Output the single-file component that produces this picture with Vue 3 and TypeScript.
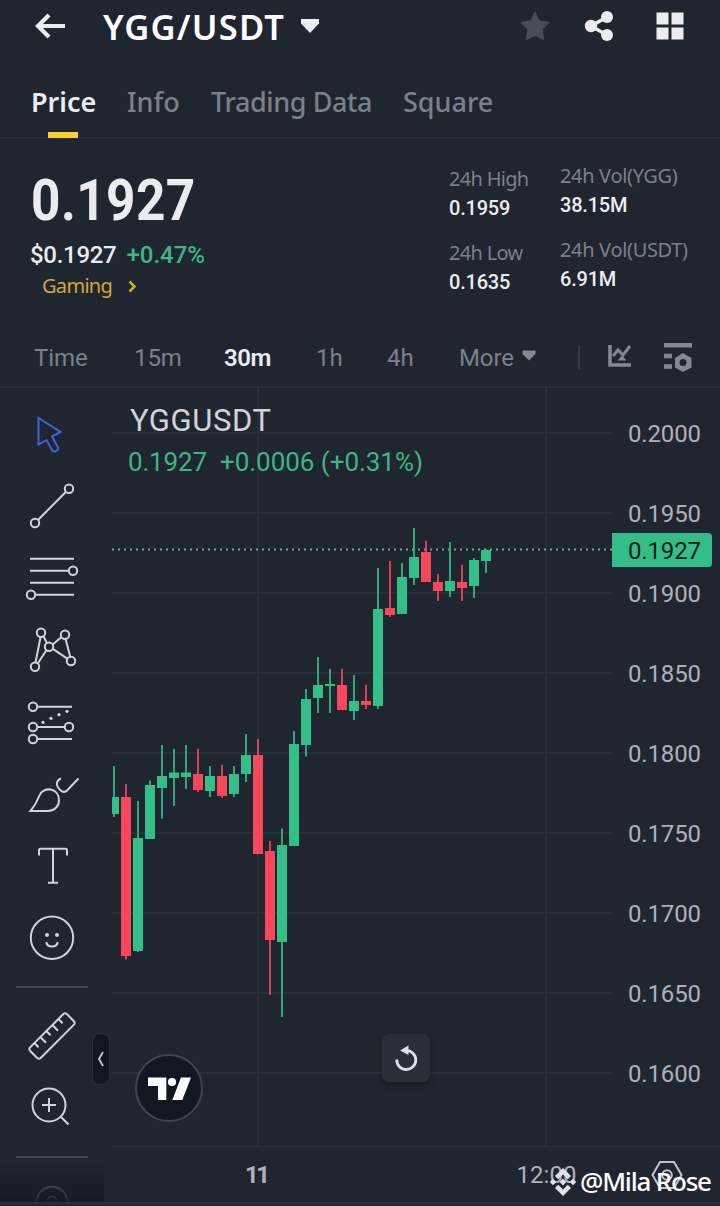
<script setup lang="ts">
type Candle = [low: number, high: number, top: number, bottom: number, up: 0 | 1]

const candles: Candle[] = [
  [766, 817, 797, 814, 1], [784, 959.5, 797, 956, 0], [801, 952, 838, 951, 1], [780.5, 839, 785, 839, 1],
  [745, 818.5, 776, 788, 1], [749, 806, 772.5, 778, 1], [745, 789, 772.5, 777, 1], [749, 792, 774, 790, 0],
  [766, 797, 776, 791, 1], [765, 798, 776, 796, 0], [766, 797, 774, 794, 1], [734, 782, 755, 774, 1],
  [739, 854, 755, 854, 0], [841, 995, 851, 940, 0], [828.5, 1017, 845, 942, 1], [731, 846, 744, 846, 1],
  [689, 756.5, 699, 745, 1], [657, 713, 685, 698, 1], [669, 713, 684, 686, 1], [669, 710, 685, 710, 0],
  [675, 720, 701, 711, 1], [685, 709, 701, 705, 0], [568, 709, 609, 706, 1], [561, 617, 608, 615, 0],
  [563, 614, 577, 614, 1], [528, 585, 557, 578, 1], [541, 582, 552, 582, 0], [574, 601, 582, 591, 0],
  [542, 597, 581, 591, 1], [565, 601, 582, 588, 0], [558, 598, 560, 586, 1], [549, 573, 550, 561, 1],
]
const prices = ['0.2000', '0.1950', '0.1900', '0.1850', '0.1800', '0.1750', '0.1700', '0.1650', '0.1600']
const tabs = ['Price', 'Info', 'Trading Data', 'Square']
const frames = ['Time', '15m', '30m', '1h', '4h']
const stats = [
  [['24h High', '0.1959'], ['24h Low', '0.1635']],
  [['24h Vol(YGG)', '38.15M'], ['24h Vol(USDT)', '6.91M']],
]
</script>

<template>
  <main class="app">
    <header class="topbar">
      <svg class="back" width="32" height="28" viewBox="0 0 32 28"><path d="M31 14H4M15 3L4 14l11 11" fill="none" stroke="#eaecef" stroke-width="4.2" /></svg>
      <h1>YGG/USDT</h1>
      <svg class="caret" width="20" height="16" viewBox="0 0 20 16"><path d="M1 1h18v4.500L10 15 1 5.500z" fill="#eaecef" /></svg>
      <svg class="star" width="32" height="32" viewBox="0 0 32 32"><path d="M16 2l4.300 8.800 9.700 1.600-6.800 7.100 1.600 10.300L16 25.200l-8.800 4.600 1.600-10.300L2 12.400l9.700-1.600z" fill="#474d57" stroke="#474d57" stroke-linejoin="round" /></svg>
      <svg class="share" width="32" height="32" viewBox="0 0 32 32"><g fill="#eaecef"><circle cx="8" cy="16" r="6.200" /><circle cx="24" cy="7" r="6" /><circle cx="24" cy="25" r="6" /></g><path d="M24 7L8 16l16 9" stroke="#eaecef" stroke-width="3.600" fill="none" /></svg>
      <svg class="apps" width="28" height="28" viewBox="0 0 28 28"><path d="M.5.5h12v12H.5zM15.500.5h12v12h-12zM.5 15.500h12v12H.5zM15.500 15.500h12v12h-12z" fill="#eaecef" /></svg>
    </header>

    <nav class="tabs">
      <span v-for="(t, i) in tabs" :key="t" :class="['tab', 't' + i, { active: i === 0 }]">{{ t }}</span>
    </nav>

    <section class="summary">
      <div class="quote">
        <div class="price">0.1927</div>
        <div class="fiat"><span>$0.1927</span><span class="gain">+0.47%</span></div>
        <div class="tag">Gaming <svg width="9" height="13" viewBox="0 0 9 13"><path d="M1.500 1.500l5 5-5 5" fill="none" stroke="#d0a92f" stroke-width="2.500" /></svg></div>
      </div>
      <dl v-for="(col, i) in stats" :key="i" :class="['stats', 's' + i]">
        <template v-for="s in col" :key="s[0]">
          <dt>{{ s[0] }}</dt>
          <dd>{{ s[1] }}</dd>
        </template>
      </dl>
    </section>

    <div class="frames">
      <span v-for="f in frames" :key="f" :class="{ on: f === '30m' }">{{ f }}</span>
      <span class="more">More <svg width="14" height="11" viewBox="0 0 14 11"><path d="M.5.5h13V4L7 10.500.5 4z" fill="#848893" /></svg></span>
      <i class="divider"></i>
      <svg class="indicator" width="24" height="24" viewBox="0 0 24 24"><path d="M2 1v20h21" fill="none" stroke="#848893" stroke-width="3.600" /><path d="M5 12l5-6 5 5 7-9" fill="none" stroke="#848893" stroke-width="3" /><path d="M9.500 16.500l4.500-5 4.500 5z" fill="#848893" /></svg>
      <svg class="settings" width="30" height="30" viewBox="0 0 30 30"><path d="M1 3.300h28M1 14h8M1 24.500h8" stroke="#848893" stroke-width="4.600" /><path d="M20 11l8.500 5v9.500L20 30l-8-4.500V16z" fill="#848893" /><circle cx="20" cy="20.500" r="3.500" fill="#1f262f" /></svg>
    </div>

    <div class="workspace">
      <aside class="tools">
        <svg class="tool" viewBox="0 0 104 72"><path class="cursor" d="M38.500 20v26.500l8-4.500 5.500 10c1.500 3 7 .5 6-2.500L52 38.500l8.500-4.500z" /></svg>
        <svg class="tool" viewBox="0 0 104 72"><circle cx="69" cy="18.700" r="4.200" /><circle cx="35" cy="53" r="4.200" /><path d="M38 50l28-28.300" /></svg>
        <svg class="tool" viewBox="0 0 104 72"><path d="M30 16.700h44M30 28.700h38.800M30 40.700h44M35.200 52.700H74" /><circle cx="73" cy="28.700" r="4.200" /><circle cx="31" cy="52.700" r="4.200" /></svg>
        <svg class="tool" viewBox="0 0 104 72"><path d="M40.600 23L35.500 48.500M43.500 22.200l3.300 6.700M52.600 30.500l9-7.500M65.600 25l4.600 18M52.800 34.800l14.500 9.800M46.500 36l-8.700 13.500" /><circle cx="41" cy="18.700" r="4.200" /><circle cx="65" cy="20.700" r="4.200" /><circle cx="49" cy="32.700" r="4.200" /><circle cx="71" cy="47" r="4.200" /><circle cx="35" cy="52.700" r="4.200" /></svg>
        <svg class="tool" viewBox="0 0 104 72"><path d="M37.200 20.700H72M37.200 41h27.600M37.200 53H72" /><circle cx="33" cy="20.700" r="4.200" /><circle cx="33" cy="41" r="4.200" /><circle cx="69" cy="41" r="4.200" /><circle cx="33" cy="53" r="4.200" /><g class="solid"><circle cx="43" cy="36.300" r="1.600" /><circle cx="51" cy="32.300" r="1.600" /><circle cx="59" cy="28.700" r="1.600" /><circle cx="67" cy="25.300" r="1.600" /></g></svg>
        <svg class="tool" viewBox="0 0 104 72"><path d="M30.500 53c5-6 7-10.500 9-15.500 4-9.500 19.500-8 19.500 5 0 6-5 10.500-11 10.500z" /><path d="M61 20.500c-4 1.500-5 5-3.500 8 2 3.500 6 7.500 9.500 4L78.500 20.500" /></svg>
        <svg class="tool" viewBox="0 0 104 72"><path d="M39 25.500v-5.300q0-1.500 1.500-1.500h25q1.500 0 1.500 1.500v5.300M53 18.700v34M48 52.700h10" /></svg>
        <svg class="tool" viewBox="0 0 104 72"><circle cx="52" cy="35.700" r="21.200" /><path d="M46.200 40c1 6 10.600 6 11.600 0" /><g class="solid"><circle cx="47" cy="33" r="2" /><circle cx="57" cy="33" r="2" /></g></svg>
        <hr />
        <svg class="tool" viewBox="0 0 104 72"><g transform="translate(52 36) rotate(-45)"><rect x="-26" y="-7.500" width="52" height="15" rx="2.800" /><path d="M-17.500-7.500v6M-9-7.500v8M-.5-7.500v6M8-7.500v8M16.500-7.500v6" /></g></svg>
        <svg class="tool" viewBox="0 0 104 72"><circle cx="49" cy="33" r="16.500" /><path d="M42 33h14M49 26v14M61 45l7.500 7.500" /></svg>
        <hr />
        <svg class="tool dim" viewBox="0 0 104 31"><circle cx="52" cy="32" r="15.200" /><circle cx="52" cy="31" r="4.500" /></svg>
        <div class="fade"></div>
        <div class="collapse"><svg width="8" height="16" viewBox="0 0 8 16"><path d="M6 1L2 8l4 7" fill="none" stroke="#c6c8cf" stroke-width="1.800" /></svg></div>
      </aside>

      <svg class="chart" viewBox="104 388 616 814" width="616" height="814">
        <g stroke="#2a303a" stroke-width="2">
          <line v-for="(p, i) in prices" :key="p" x1="112" x2="612" :y1="433 + i * 80" :y2="433 + i * 80" />
          <path d="M258 388v758M546 388v758M112 1146.500h608" />
        </g>
        <path d="M112 549.500h500" stroke="#67aa96" stroke-width="2" stroke-dasharray="2 4" />
        <g v-for="(c, i) in candles" :key="i" :fill="c[4] ? '#33bd87' : '#f6475d'">
          <rect :x="113 + i * 12" :y="c[0]" width="2" :height="c[1] - c[0]" fill-opacity=".85" />
          <rect :x="i ? 109 + i * 12 : 112" :y="c[2]" :width="i ? 10 : 7" :height="c[3] - c[2]" />
        </g>
        <g class="axis">
          <text v-for="(p, i) in prices" :key="p" x="628" :y="442 + i * 80" textLength="73">{{ p }}</text>
          <text x="245" y="1183" font-weight="700" textLength="25">11</text>
          <text x="516.500" y="1183" textLength="60">12:00</text>
        </g>
        <path d="M612 533h96q4 0 4 4v26q0 4-4 4h-96z" fill="#33bd87" />
        <text x="628" y="559" class="last" textLength="73">0.1927</text>
        <text x="130" y="431" class="symbol" textLength="141">YGGUSDT</text>
        <text x="128" y="471" class="change" textLength="79">0.1927</text>
        <text x="220" y="471" class="change" textLength="203">+0.0006 (+0.31%)</text>

        <circle cx="169" cy="1088" r="33" fill="#131722" stroke="#41454f" stroke-width="2" />
        <g fill="#fff">
          <path d="M148 1077.500h18.300v22.500H158v-14h-10zM181 1077.500h10l-8.700 22.500h-10z" /><circle cx="172" cy="1082" r="4.100" />
        </g>
        <g class="reset"><rect x="382" y="1034" width="48" height="48" rx="7" fill="#2a2e39" /><path d="M396.800 1059.500a9.500 9.500 0 1 0 9.200-9" fill="none" stroke="#dde0e8" stroke-width="2.800" /><path d="M408.500 1045.500v9.500l-8.500-4.500z" fill="#dde0e8" /></g>

        <g fill="none" stroke="#c0c3ca" stroke-width="2"><path d="M660 1162h14l7.500 13-7.500 13h-14l-7.500-13z" /><circle cx="667" cy="1175" r="4.800" /></g>
        <g class="watermark" fill="#dfe2e8">
          <path d="M563 1168l8 8-3.200 3.200-4.800-4.800-4.800 4.800-3.200-3.200zM563 1196l8-8-3.200-3.200-4.800 4.800-4.800-4.800-3.200 3.200zM563 1178.600l3.400 3.400-3.400 3.400-3.400-3.400zM553 1178.800l3.200 3.200-3.200 3.200-3.200-3.200zM573 1178.800l3.200 3.200-3.200 3.200-3.200-3.200z" />
          <text x="580" y="1191" textLength="132">@Mila Rose</text>
        </g>
      </svg>
    </div>
  </main>
</template>

<style>
body { margin: 0; background: #1f262f; }
</style>

<style scoped>
.app { width: 720px; height: 1206px; overflow: hidden; background: #1f262f; color: #eaecef; font-family: "Noto Sans", sans-serif; box-sizing: border-box; }
.topbar { display: flex; align-items: center; height: 54px; padding: 0 36px 0 34px; }
.back { margin-top: -2px; }
h1 { margin: 0 0 0 37px; width: 197px; font-size: 34.5px; line-height: 54px; font-weight: 600; letter-spacing: 1.2px; color: #fff; white-space: nowrap; }
.caret { margin-top: -3px; }
.star { margin-left: 199px; margin-top: -2px; }
.share { margin-left: 32px; margin-top: -2px; }
.apps { margin-left: auto; margin-top: -3px; }
.tabs { display: grid; grid-template-columns: 96px 84px 192px 1fr; height: 85px; box-sizing: border-box; padding-left: 31px; border-bottom: 2px solid #2a303a; font-size: 27px; line-height: 96px; font-weight: 500; color: #7b808b; white-space: nowrap; }
.tab.t2 { letter-spacing: -0.4px; }
.tab.active { color: #eaecef; position: relative; font-weight: 600; }
.tab.active::after { content: ""; position: absolute; left: 17px; top: 78px; width: 30px; height: 6px; background: #f8d033; }
.summary { display: grid; grid-template-columns: 418px 111px 1fr; padding-left: 31px; height: 189px; }
.quote { padding-top: 32px; }
.price { font: 700 57px/60px Roboto, sans-serif; letter-spacing: 0.5px; transform: scaleX(0.9); transform-origin: 0 0; }
.fiat { display: flex; gap: 10px; margin: 8px 0 0 -1px; font: 500 24px/32px Roboto, sans-serif; }
.fiat span:first-child { letter-spacing: -0.3px; }
.gain { color: #3eb584; }
.tag { margin: 0 0 0 11px; font-size: 20px; line-height: 29px; letter-spacing: -0.7px; color: #d0a92f; }
.tag svg { margin-left: 11px; }
.stats { margin: 26px 0 0; font-size: 20px; line-height: 28px; white-space: nowrap; }
.stats.s1 { margin-top: 23px; }
dt { color: #7b808b; letter-spacing: -0.7px; }
.s1 dt { letter-spacing: -0.33px; }
dd { margin: 0 0 15px; font: 500 20px/31px Roboto, sans-serif; letter-spacing: -0.2px; }
.frames { display: grid; grid-template-columns: 100px 90px 92px 71px 72px 119px 30px 56px 30px; align-items: center; box-sizing: border-box; height: 60px; padding-left: 34px; border-bottom: 2px solid #2a303a; font: 400 24px/56px Roboto, sans-serif; color: #7b808b; }
.frames span { padding-top: 1px; letter-spacing: -0.1px; }
.frames .on { color: #eaecef; font-weight: 600; letter-spacing: -0.4px; }
.more svg { margin: 0 0 5px 2px; }
.divider { width: 2px; height: 24px; background: #343a45; }
.indicator { margin-top: -2px; }
.settings { margin: -1px 0 0 -1px; }
.workspace { display: flex; height: 814px; border-bottom: 2px solid #2a303a; }
.tools { position: relative; display: flex; flex-direction: column; width: 104px; height: 814px; padding-top: 10px; box-sizing: border-box; }
.tool { flex: none; width: 104px; height: 72px; fill: none; stroke: #d1d4dc; stroke-width: 2; }
.tool .cursor { stroke: #3d65d8; }
.tool .solid { fill: #d1d4dc; stroke: none; }
.tool.dim { height: 31px; margin-top: -12px; padding-top: 12px; overflow: hidden; stroke: #656a74; }
.tools hr { flex: none; width: 72px; height: 2px; margin: 12px 16px; border: 0; background: #434852; }
.fade { position: absolute; left: 0; bottom: 0; width: 104px; height: 42px; background: linear-gradient(#13172200, #131722cc); }
.collapse { position: absolute; left: 93px; top: 646px; width: 16px; height: 50px; display: grid; place-items: center; border-radius: 7px; background: #131722; box-shadow: 0 0 0 1px #2a303a; }
.chart { flex: none; font-family: Roboto, sans-serif; }
.axis text { font-size: 24px; fill: #aeb1bb; }
.last { font-size: 24px; fill: #101820; }
.symbol { font-size: 31px; fill: #d1d4dc; }
.change { font-size: 26px; fill: #3eb584; }
.reset { filter: drop-shadow(0 3px 3px #1118); }
.watermark text { font: 500 26px "Noto Sans", sans-serif; fill: #fff; }
</style>
